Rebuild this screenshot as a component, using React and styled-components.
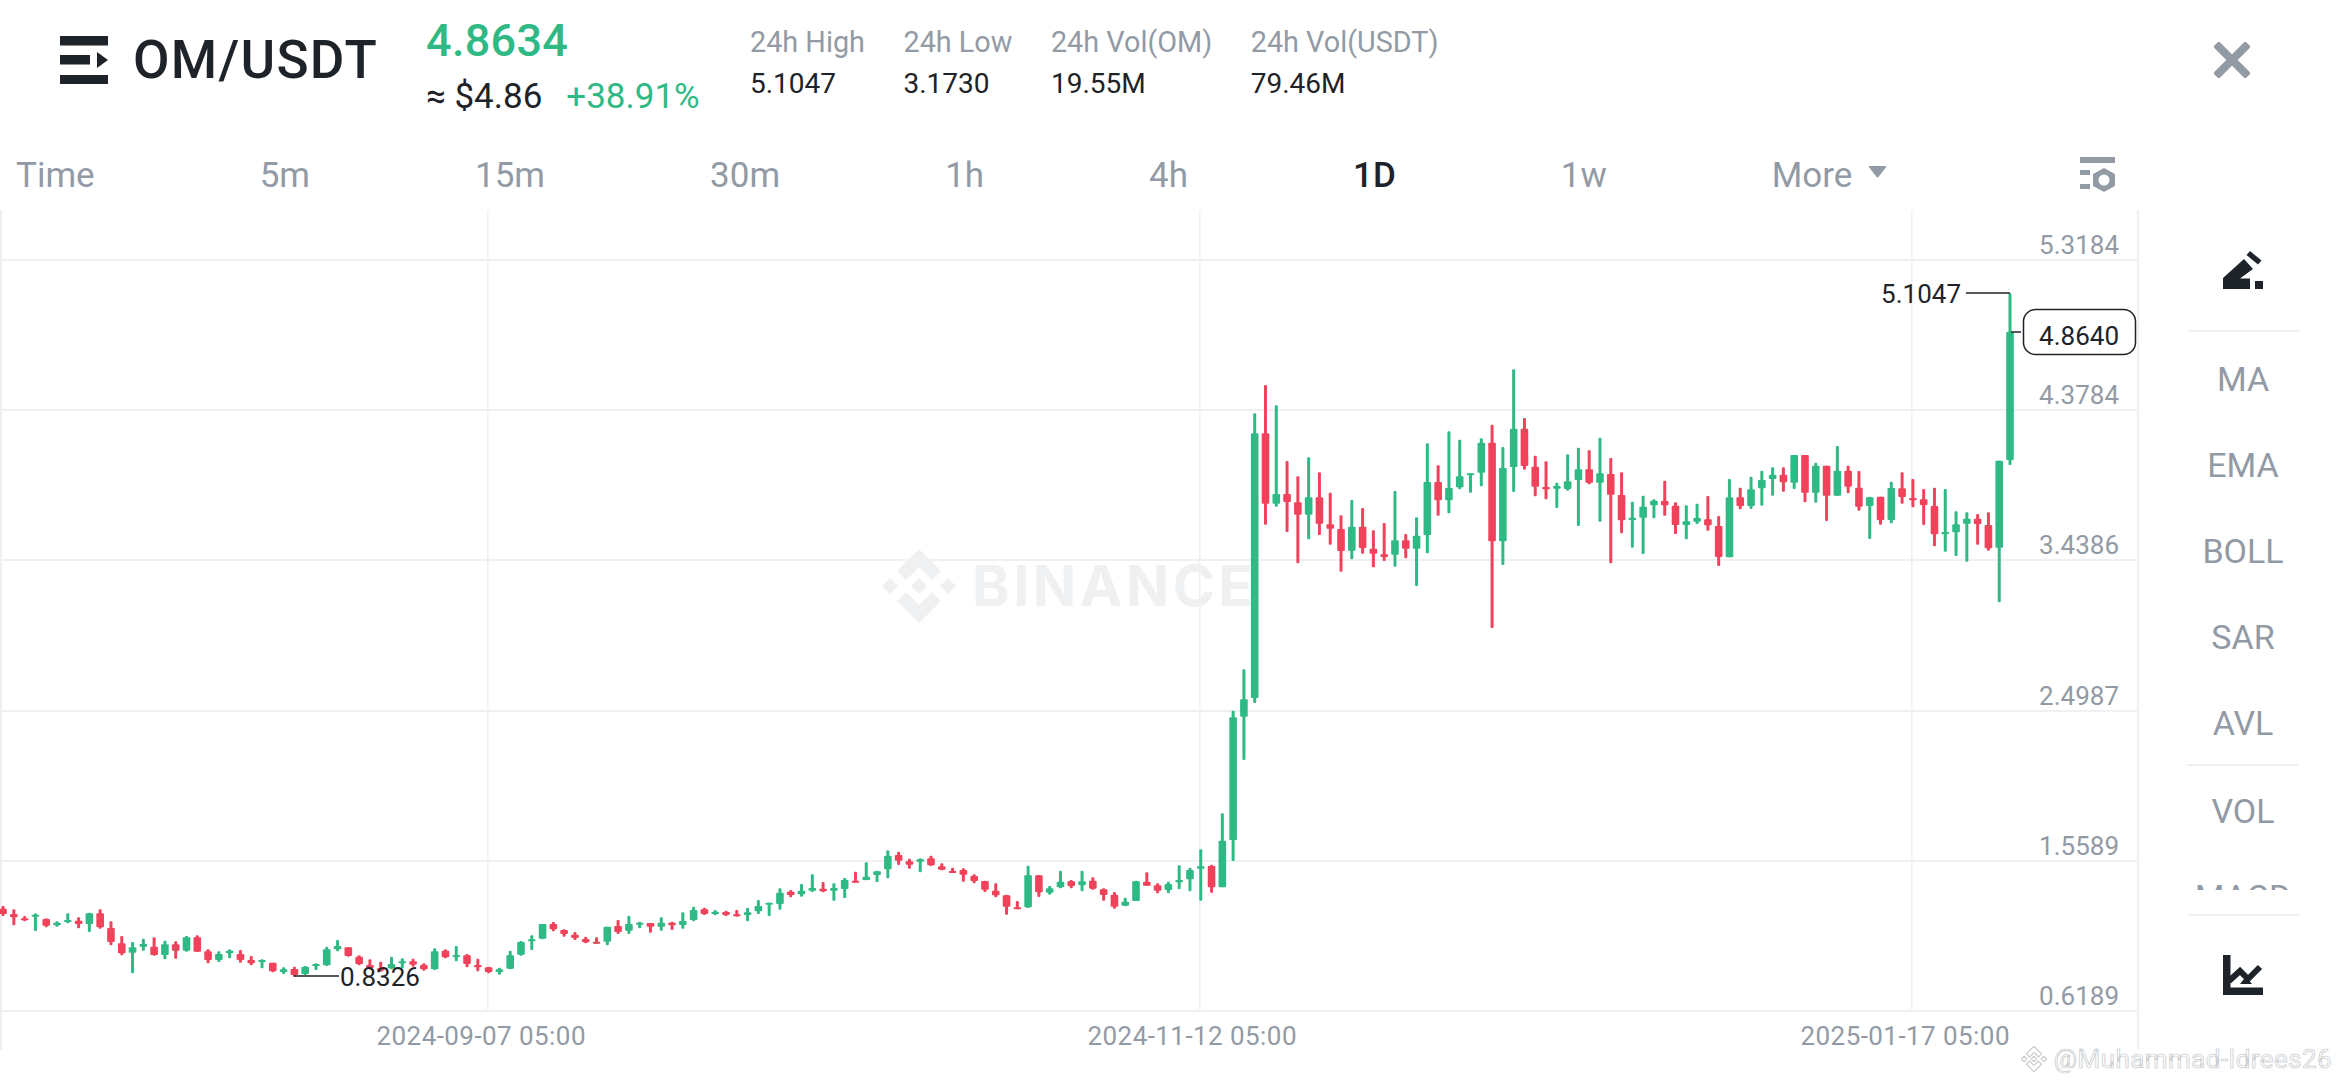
import React from "react";
import styled, { createGlobalStyle } from "styled-components";

const GREEN = "#2FBA85";
const RED = "#F0435B";
const INK = "#1E2329";
const GREY = "#929AA5";
const LINE = "#EEF0F2";

const GlobalStyle = createGlobalStyle`
  html, body { margin: 0; padding: 0; background: #fff; }
  body { font-family: Roboto, "Noto Sans", sans-serif; color: ${INK}; }
`;

// candles are read as [colour, wick top, body top, body bottom, wick bottom],
// each batch measured from its own top offset at 3 units per pixel
const batches = [
  { top: 860, rows: [
    ["r",138,146,162,168],["r",148,162,172,196],["r",168,175,181,184],["g",160,164,170,213],["r",175,177,197,202],
    ["g",184,188,196,200],["g",160,180,186,190],["r",172,182,192,205],["g",158,160,192,216],["r",148,160,202,206],
    ["r",184,204,246,256],["r",228,250,280,286],["g",246,262,278,340],["g",236,252,260,272],["r",232,260,285,287],
    ["g",242,253,285,298],["r",244,253,272,296],["g",228,232,272,275],["r",226,232,275,276],["r",268,274,300,310],
    ["g",274,282,300,306],["g",268,272,280,295],["r",270,282,300,308],["r",288,300,310,316],["g",298,300,306,325],
    ["r",308,308,334,337],["g",322,328,336,342],["r",320,327,345,350],["g",318,320,342,345],["g",310,312,318,330],
    ["g",260,268,316,318],["g",240,258,268,274],["r",262,262,288,290],["r",286,290,312,316],["r",298,315,325,328],
    ["r",305,325,332,335],["g",290,312,325,328],["g",295,304,310,325],["r",296,304,314,320],["r",310,315,328,332],
    ["g",265,274,328,330],["r",268,272,292,295],["g",258,285,291,304],["r",282,286,312,322],["r",296,315,322,334],
    ["r",320,322,336,340],["g",323,328,336,344],["g",272,286,326,328],["g",243,246,284,287],["g",226,238,244,270],
    ["g",192,192,236,238],["r",186,192,208,214],["r",208,210,222,230],["r",216,224,234,240],["r",230,237,247,250],
    ["r",232,245,250,252],["g",200,200,245,256],["r",180,198,216,222],["g",167,192,212,222],
  ] },
  { top: 820, rows: [
    ["g",305,308,312,325],["r",309,309,320,338],["g",292,308,320,332],["r",305,308,316,330],["g",277,303,315,326],
    ["g",260,270,300,304],["r",263,268,282,285],["g",270,275,282,286],["r",272,276,285,288],["r",270,283,289,290],
    ["g",263,277,285,304],["g",240,258,274,282],["g",248,248,252,288],["g",205,218,252,269],["r",210,215,225,232],
    ["g",192,212,223,230],["g",163,204,212,216],["r",186,206,214,217],["g",190,204,212,242],["g",174,180,207,234],
    ["r",155,182,188,189],["g",127,170,180,181],["g",152,154,165,186],["g",91,107,148,175],["r",95,105,122,135],
    ["r",116,124,134,146],["g",115,118,125,157],["r",107,115,136,138],["r",130,139,149,151],["r",143,153,158,158],
    ["r",145,150,164,185],["r",163,168,183,190],["r",182,183,209,216],["r",190,212,226,232],["r",224,226,260,284],
    ["r",243,262,267,268],["g",137,166,262,264],["r",165,166,217,231],["g",198,205,218,224],["g",152,185,202,205],
    ["r",180,184,198,205],["g",152,184,196,214],["r",172,182,206,209],["r",205,208,225,242],["r",216,224,260,266],
    ["g",233,245,257,259],["g",182,184,243,243],["r",157,185,197,198],["r",190,196,212,220],["g",185,192,210,220],
    ["g",136,180,187,208],["g",143,150,178,214],
  ] },
  { top: 640, rows: [
    ["g",628,679,686,782],["r",674,678,742,758],["g",520,602,742,742],["g",212,232,600,663],["g",88,178,230,360],
  ] },
  { top: 360, rows: [
    ["g",160,220,1014,1029],["r",75,220,431,494],["g",136,402,431,440],["r",303,402,426,516],["r",349,427,464,610],
    ["g",292,412,464,538],["r",337,412,491,525],["r",398,493,506,554],["r",466,507,573,635],["g",420,500,572,598],
    ["r",444,500,564,581],["r",511,566,581,622],["r",489,583,591,603],["g",393,541,584,620],["r",522,541,566,595],
    ["g",472,527,566,678],["g",250,366,525,580],["r",316,366,421,467],["g",214,384,421,460],["g",239,349,382,388],
    ["g",340,340,346,398],["g",235,248,338,379],["r",194,248,544,804],["g",261,324,544,615],["g",28,206,321,396],
    ["r",174,206,318,329],["r",287,320,380,409],["r",304,381,388,418],["g",368,378,386,444],
  ] },
  { top: 340, rows: [
    ["g",343,424,447,452],["g",323,388,420,558],["r",331,388,428,433],["g",293,400,428,545],["r",354,402,464,670],
    ["r",397,465,541,580],["g",485,533,540,623],["g",467,500,533,642],["g",478,482,496,535],["r",422,483,496,527],
    ["r",487,497,555,582],["g",496,544,555,598],["g",491,534,545,552],["r",468,538,556,572],["r",528,558,651,678],
    ["g",417,472,652,652],["r",443,472,498,508],["g",410,448,498,507],["g",392,420,445,497],["g",382,404,417,467],
    ["r",382,404,427,455],["g",345,345,428,447],["r",345,345,458,487],["g",368,377,458,488],["r",377,377,467,543],
    ["g",318,392,467,467],["r",377,392,440,460],["r",393,443,500,512],["g",470,472,498,597],["r",470,470,540,554],
    ["g",425,444,540,550],["r",397,445,471,491],["r",417,474,481,502],["r",447,478,495,555],["r",443,498,583,619],
    ["g",447,576,583,635],["g",514,553,577,648],["g",517,536,551,665],["r",522,536,552,614],["r",517,555,625,632],
    ["g",362,362,623,787],["g",-140,-24,360,375],
  ] },
];

const LAST_X = 2010;
const STEP = 10.79;
const candles = batches.flatMap(({ top, rows }) =>
  rows.map(([c, hi, o, e, lo]) => ({
    color: c === "g" ? GREEN : RED,
    hi: top + hi / 3,
    o: top + o / 3,
    e: top + e / 3,
    lo: top + lo / 3,
  }))
).map((c, i, all) => ({ ...c, x: LAST_X - STEP * (all.length - 1 - i) }));

const priceLevels = [
  { y: 260, label: "5.3184" },
  { y: 410, label: "4.3784" },
  { y: 560, label: "3.4386" },
  { y: 711, label: "2.4987" },
  { y: 861, label: "1.5589" },
  { y: 1011, label: "0.6189" },
];
const timeMarks = [
  { grid: 488, x: 481, label: "2024-09-07 05:00" },
  { grid: 1200, x: 1192, label: "2024-11-12 05:00" },
  { grid: 1912, x: 1905, label: "2025-01-17 05:00" },
];
const stats = [
  ["24h High", "5.1047"],
  ["24h Low", "3.1730"],
  ["24h Vol(OM)", "19.55M"],
  ["24h Vol(USDT)", "79.46M"],
];
const ranges = ["Time", "5m", "15m", "30m", "1h", "4h", "1D", "1w"];
const indicators = ["MA", "EMA", "BOLL", "SAR", "AVL", "VOL", "MACD"];

const Page = styled.div`
  position: relative;
  width: 2340px;
  height: 1080px;
  overflow: hidden;
  background: #fff;
`;

const Header = styled.header`
  display: flex;
  height: 140px;
  padding-left: 60px;
`;

const Symbol = styled.div`
  display: flex;
  align-items: center;
  gap: 25px;
  width: 366px;
  height: 120px;
`;

const SymbolName = styled.span`
  font-size: 53px;
  font-weight: 500;
  letter-spacing: 1.3px;
`;

const PriceBlock = styled.div`
  width: 324px;
  padding-top: 14px;
`;

const LastPrice = styled.div`
  font-size: 45px;
  line-height: 53px;
  font-weight: 500;
  letter-spacing: 0.3px;
  color: ${GREEN};
`;

const PriceRow = styled.div`
  display: flex;
  gap: 24px;
  margin-top: 10px;
  font-size: 35px;
  line-height: 40px;
`;

const Change = styled.span`
  color: ${GREEN};
`;

const Stats = styled.div`
  display: flex;
  gap: 38.5px;
  padding-top: 24px;
`;

const Stat = styled.div`
  display: flex;
  flex-direction: column;
  gap: 6px;
`;

const StatLabel = styled.span`
  font-size: 28.8px;
  line-height: 36px;
  color: ${GREY};
`;

const StatValue = styled.span`
  font-size: 28px;
  line-height: 36px;
`;

const CloseButton = styled.button`
  display: flex;
  margin: 42px 90px 0 auto;
  padding: 0;
  border: 0;
  background: none;
  height: 36px;
`;

const RangeBar = styled.nav`
  display: flex;
  align-items: center;
  gap: 165px;
  height: 70px;
  padding: 0 225px 0 16px;
`;

const Range = styled.span`
  font-size: 35px;
  color: ${(p) => (p.$active ? INK : GREY)};
  font-weight: ${(p) => (p.$active ? 500 : 400)};
`;

const More = styled(Range)`
  display: flex;
  align-items: center;
  gap: 16px;
  svg { margin-bottom: 7px; }
`;

const SettingsButton = styled.span`
  display: flex;
  margin-left: auto;
`;

const Body = styled.main`
  display: flex;
  height: 870px;
`;

const ChartPane = styled.div`
  width: 2140px;
  height: 840px;
  svg { display: block; }
`;

const Side = styled.aside`
  flex: 1;
  display: flex;
  flex-direction: column;
  align-items: center;
  padding: 40px 0 0 6px;
`;

const SideIcon = styled.div`
  display: flex;
  height: 40px;
  align-items: center;
`;

const Divider = styled.hr`
  width: 111px;
  height: 2px;
  margin: ${(p) => p.$margin};
  border: 0;
  background: ${LINE};
`;

const IndicatorList = styled.div`
  width: 100%;
  height: 554px;
  overflow: hidden;
`;

const Indicator = styled.div`
  display: flex;
  align-items: center;
  justify-content: center;
  height: 86px;
  font-size: 34px;
  color: ${GREY};
  ${(p) => p.$rule && `
    position: relative;
    margin-bottom: 2px;
    &::after {
      content: "";
      position: absolute;
      left: 41px;
      bottom: 0;
      width: 111px;
      height: 2px;
      background: ${LINE};
    }
  `}
`;

const AxisText = styled.text`
  font-family: Roboto, "Noto Sans", sans-serif;
  font-size: 26px;
  fill: ${(p) => (p.$dark ? INK : GREY)};
  text-anchor: ${(p) => p.$anchor || "end"};
`;

const WatermarkText = styled.text`
  font-family: Inter, Roboto, sans-serif;
  font-size: 57px;
  font-weight: 700;
  letter-spacing: 3.5px;
  fill: #eff0f1;
`;

const Credit = styled.div`
  position: absolute;
  right: 8px;
  bottom: 7px;
  display: flex;
  align-items: center;
  gap: 7px;
  font-size: 26px;
  line-height: 28px;
  letter-spacing: 0.4px;
  color: #fff;
  -webkit-text-stroke: 0.7px #c4c7cb;
`;

const MenuIcon = () => (
  <svg width="48" height="48" viewBox="0 0 48 48" fill={INK}>
    <rect x="0" y="0" width="48" height="9.5" />
    <rect x="0" y="19" width="30" height="9.5" />
    <polygon points="37,16 48,24 37,32" />
    <rect x="0" y="39" width="48" height="9" />
  </svg>
);

const CloseIcon = () => (
  <svg width="36" height="36" viewBox="0 0 36 36" stroke={GREY} strokeWidth="8" fill="none">
    <path d="M2 2 L34 34 M34 2 L2 34" />
  </svg>
);

const Caret = () => (
  <svg width="19" height="12" viewBox="0 0 20 13" fill={GREY}>
    <path d="M1.5 0 H18.5 Q20 0 19 1.5 L11 12 Q10 13 9 12 L1 1.5 Q0 0 1.5 0 Z" />
  </svg>
);

const SettingsIcon = () => (
  <svg width="35" height="36" viewBox="0 0 35 36" fill={GREY}>
    <rect x="0" y="0" width="35" height="6" />
    <rect x="0" y="13" width="10" height="5" />
    <rect x="0" y="27" width="10" height="5" />
    <path fillRule="evenodd" d="M24 11 L35 17 V29 L24 35 L13 29 V17 Z M24 17.5 A5.5 5.5 0 1 0 24 28.5 A5.5 5.5 0 1 0 24 17.5 Z" />
  </svg>
);

const PencilIcon = () => (
  <svg width="40" height="38" viewBox="0 0 40 38" fill={INK}>
    <polygon points="0,38 0,27 21,8 30,18 17,27.5 27,27.5 27,38" />
    <polygon points="27,0 38.5,9.5 35,13.5 23.5,4" />
    <rect x="32" y="30" width="8" height="8" />
  </svg>
);

const TrendIcon = () => (
  <svg width="40" height="40" viewBox="0 0 40 40">
    <path fill={INK} d="M0 0 H7.5 V32.5 H40 V40 H0 Z" />
    <path fill="none" stroke={INK} strokeWidth="6" d="M6 26 L17 16 L25 24 L37 12" />
    <polygon fill={INK} points="17,29 29,29 23,21.5" />
  </svg>
);

const BinanceMark = ({ x, y, r, fill, stroke, strokeWidth }) => {
  const s = r / 37;
  return (
    <g transform={`translate(${x} ${y}) scale(${s})`} fill={fill} stroke={stroke} strokeWidth={strokeWidth}>
      <polygon points="0,-37 22,-15 13,-6 0,-19 -13,-6 -22,-15" />
      <polygon points="0,37 22,15 13,6 0,19 -13,6 -22,15" />
      <polygon points="0,-8 8,0 0,8 -8,0" />
      <polygon points="-29,-8 -21,0 -29,8 -37,0" />
      <polygon points="29,-8 37,0 29,8 21,0" />
    </g>
  );
};

const Candle = ({ x, hi, o, e, lo, color }) => (
  <g fill={color}>
    <rect x={x - 1.5} y={hi} width="3" height={lo - hi} rx="1" />
    <rect x={x - 3.8} y={o} width="7.6" height={Math.max(e - o, 2)} rx="1" />
  </g>
);

const Chart = () => (
  <svg width="2140" height="840" viewBox="0 210 2140 840">
    <BinanceMark x={919} y={586} r={37} fill="#eff0f1" />
    <WatermarkText x={972} y={606}>BINANCE</WatermarkText>

    <rect x="0" y="210" width="2" height="840" fill={LINE} />
    <rect x="2137" y="210" width="2" height="840" fill={LINE} />
    {priceLevels.map((l) => (
      <rect key={l.y} x="0" y={l.y - 1} width="2137" height="2" fill={LINE} />
    ))}
    {timeMarks.map((m) => (
      <rect key={m.grid} x={m.grid - 1} y="210" width="1.5" height="801" fill={LINE} />
    ))}

    {priceLevels.map((l) => (
      <AxisText key={l.label} x="2119" y={l.y - 6}>{l.label}</AxisText>
    ))}
    {timeMarks.map((m) => (
      <AxisText key={m.label} x={m.x} y="1045" $anchor="middle" textLength="209">{m.label}</AxisText>
    ))}

    {candles.map((c, i) => <Candle key={i} {...c} />)}

    <path d="M1966 293 H2010" stroke={INK} strokeWidth="1.5" fill="none" />
    <AxisText x="1961" y="303" $dark>5.1047</AxisText>
    <path d="M294 976 H339" stroke={INK} strokeWidth="1.5" fill="none" />
    <AxisText x="340" y="986" $dark $anchor="start">0.8326</AxisText>

    <path d="M2011 332 H2021" stroke={INK} strokeWidth="1.5" fill="none" />
    <rect x="2023.5" y="309.5" width="112" height="45" rx="12" fill="#fff" stroke={INK} strokeWidth="1.5" />
    <AxisText x="2119" y="345" $dark>4.8640</AxisText>
  </svg>
);

export default function App() {
  return (
    <Page>
      <GlobalStyle />
      <Header>
        <Symbol>
          <MenuIcon />
          <SymbolName>OM/USDT</SymbolName>
        </Symbol>
        <PriceBlock>
          <LastPrice>4.8634</LastPrice>
          <PriceRow>
            <span>≈ $4.86</span>
            <Change>+38.91%</Change>
          </PriceRow>
        </PriceBlock>
        <Stats>
          {stats.map(([label, value]) => (
            <Stat key={label}>
              <StatLabel>{label}</StatLabel>
              <StatValue>{value}</StatValue>
            </Stat>
          ))}
        </Stats>
        <CloseButton><CloseIcon /></CloseButton>
      </Header>

      <RangeBar>
        {ranges.map((r) => (
          <Range key={r} $active={r === "1D"}>{r}</Range>
        ))}
        <More>More <Caret /></More>
        <SettingsButton><SettingsIcon /></SettingsButton>
      </RangeBar>

      <Body>
        <ChartPane><Chart /></ChartPane>
        <Side>
          <SideIcon><PencilIcon /></SideIcon>
          <Divider $margin="40px 0 4px" />
          <IndicatorList>
            {indicators.map((name) => (
              <Indicator key={name} $rule={name === "AVL"}>{name}</Indicator>
            ))}
          </IndicatorList>
          <Divider $margin="24px 0 39px" />
          <SideIcon><TrendIcon /></SideIcon>
        </Side>
      </Body>

      <Credit>
        <svg width="26" height="26" viewBox="-38 -38 76 76">
          <BinanceMark x={0} y={0} r={37} fill="none" stroke="#c4c7cb" strokeWidth="3" />
        </svg>
        @Muhammad-Idrees26
      </Credit>
    </Page>
  );
}
